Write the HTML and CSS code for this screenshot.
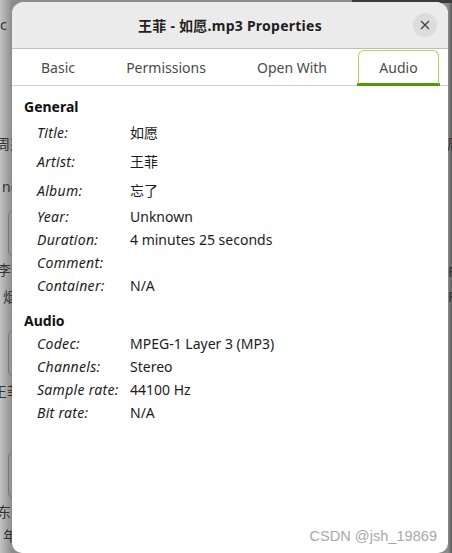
FILE: index.html
```html
<!DOCTYPE html>
<html>
   <head>
      <title>Properties</title>
      <meta name="viewport" content="width=device-width, initial-scale=1">
      <link rel="stylesheet" href="styles.css">
   </head>
   <body>
      <div class="behind">
         <div class="top-band"></div>
         <span class="scrap" style="left:0;top:16px">c</span>
         <span class="scrap" style="left:-4px;top:135px">周杰</span>
         <span class="scrap" style="left:2px;top:178px">nc</span>
         <span class="scrap" style="left:-3px;top:261px">李雪</span>
         <span class="scrap" style="left:3px;top:288px">烟</span>
         <span class="scrap" style="left:-7px;top:383px">王菲</span>
         <span class="scrap" style="left:-3px;top:503px">东</span>
         <span class="scrap" style="left:3px;top:527px">年</span>
         <span class="scrap" style="left:447px;top:135px">周</span>
         <span class="scrap" style="left:448px;top:263px">F</span>
         <span class="scrap" style="left:448px;top:288px">F</span>
         <span class="thumb" style="top:210px"></span>
         <span class="thumb" style="top:330px"></span>
         <span class="thumb" style="top:452px"></span>
      </div>
      <div class="dialog">
         <header class="titlebar">
            <div class="title">王菲 - 如愿.mp3 Properties</div>
            <button class="close-button">
               <svg width="10" height="10" viewBox="0 0 10 10">
                  <path d="M1 1L9 9M9 1L1 9" stroke="#3d3d3d" stroke-width="1.2" fill="none"/>
               </svg>
            </button>
         </header>
         <nav class="tabs">
            <div class="tab tab-basic">Basic</div>
            <div class="tab tab-permissions">Permissions</div>
            <div class="tab tab-open">Open With</div>
            <div class="tab tab-active"><span class="tab-focus">Audio</span></div>
         </nav>
         <div class="content">
            <h2 class="section-title">General</h2>
            <div class="props">
               <div class="prop prop-cjk"><span class="label">Title:</span><span class="value">如愿</span></div>
               <div class="prop prop-cjk"><span class="label">Artist:</span><span class="value">王菲</span></div>
               <div class="prop prop-cjk prop-cjk-last"><span class="label">Album:</span><span class="value">忘了</span></div>
               <div class="prop"><span class="label">Year:</span><span class="value">Unknown</span></div>
               <div class="prop"><span class="label">Duration:</span><span class="value">4 minutes 25 seconds</span></div>
               <div class="prop"><span class="label">Comment:</span><span class="value"></span></div>
               <div class="prop"><span class="label">Container:</span><span class="value">N/A</span></div>
            </div>
            <h2 class="section-title section-audio">Audio</h2>
            <div class="props props-audio">
               <div class="prop"><span class="label">Codec:</span><span class="value">MPEG-1 Layer 3 (MP3)</span></div>
               <div class="prop"><span class="label">Channels:</span><span class="value">Stereo</span></div>
               <div class="prop"><span class="label">Sample rate:</span><span class="value">44100 Hz</span></div>
               <div class="prop"><span class="label">Bit rate:</span><span class="value">N/A</span></div>
            </div>
         </div>
         <div class="watermark">CSDN @jsh_19869</div>
      </div>
   </body>
</html>
```

FILE: styles.css
```css
* {
   box-sizing: border-box;
}

body, html {
   height: 100%;
   margin: 0;
   overflow: hidden;
   font-family: "Noto Sans", "Noto Sans CJK SC", sans-serif;
   font-size: 14px;
   color: #2c2c2c;
}

body {
   position: relative;
   display: flex;
   padding: 2px 4px 0 12px;
   background: linear-gradient(90deg, #c4c4c4 0, #8c8c8c 12px, #8c8c8c 448px, #5c5c5c 452px);
}

.behind {
   position: absolute;
   top: 0;
   left: 0;
   width: 100%;
   height: 100%;
}

.top-band {
   position: absolute;
   top: 0;
   right: 0;
   width: 100px;
   height: 3px;
   background: #3a3a3a;
}

.scrap {
   position: absolute;
   font-size: 14px;
   line-height: 18px;
   color: #333;
}

.thumb {
   position: absolute;
   left: 8px;
   width: 10px;
   height: 46px;
   border: 1px solid #777;
   border-radius: 6px;
}

.dialog {
   position: relative;
   z-index: 1;
   width: 436px;
   height: 551px;
   display: flex;
   flex-direction: column;
   background: #fff;
   border-radius: 12px 12px 10px 10px;
   overflow: hidden;
}

.titlebar {
   height: 47px;
   flex: none;
   display: flex;
   align-items: center;
   justify-content: center;
   position: relative;
   background: #ebebeb;
   border-bottom: 1px solid #bdbdbd;
}

.title {
   font-weight: bold;
   font-size: 14px;
   letter-spacing: 0.25px;
   color: #1f1f1f;
}

.close-button {
   position: absolute;
   top: 11px;
   right: 11px;
   width: 24px;
   height: 24px;
   padding: 0;
   border: none;
   border-radius: 50%;
   background: #dcdcdc;
   display: flex;
   align-items: center;
   justify-content: center;
}

.tabs {
   height: 37px;
   flex: none;
   display: flex;
   border-bottom: 1px solid #cfcfcf;
}

.tab {
   flex: none;
   display: flex;
   align-items: center;
   justify-content: center;
   color: #4a4a4a;
   font-size: 14px;
}

.tab-basic {
   width: 92px;
}

.tab-permissions {
   width: 124px;
}

.tab-open {
   width: 128px;
}

.tab-active {
   width: 83px;
   height: 37px;
   margin-left: 1px;
   align-items: flex-start;
   border-bottom: 3px solid #4e9a06;
}

.tab-focus {
   width: 81px;
   height: 34px;
   margin-top: 1px;
   display: flex;
   align-items: center;
   justify-content: center;
   border: 1px solid #a5dc5a;
   border-bottom: none;
   border-radius: 6px 6px 0 0;
}

.content {
   flex: 1;
   padding: 12px 12px 0;
}

.section-title {
   margin: 0;
   font-size: 14px;
   line-height: 17px;
   font-weight: bold;
   color: #111;
}

.section-audio {
   margin-top: 15px;
}

.props {
   margin-top: 2px;
   padding-left: 13px;
}

.props-audio {
   margin-top: 3px;
}

.prop {
   display: flex;
   height: 23px;
   align-items: center;
   color: #1c1c1c;
}

.prop-cjk {
   height: 29px;
}

.prop-cjk .label {
   margin-top: 2px;
}

.prop-cjk-last {
   margin-bottom: 1px;
}

.label {
   width: 93px;
   flex: none;
   font-style: italic;
   letter-spacing: 0.3px;
}

.watermark {
   position: absolute;
   right: 11px;
   bottom: 9px;
   font-family: "Liberation Sans", sans-serif;
   font-size: 14.6px;
   color: #a8a8a8;
}
```
